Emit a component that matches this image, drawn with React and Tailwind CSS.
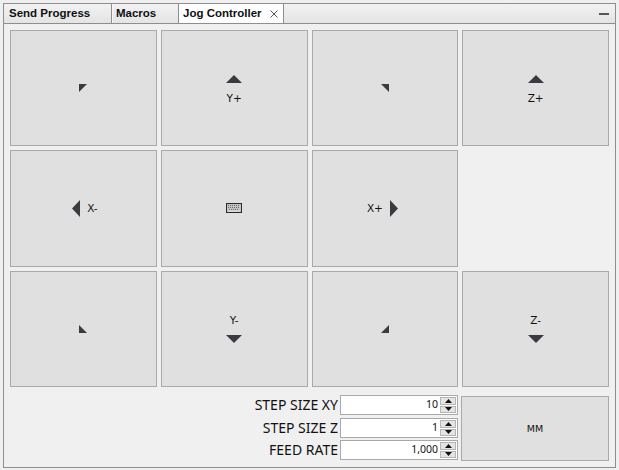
const JogButton = ({ children, className = '' }) => (
  <button className={`flex flex-col items-center justify-center bg-[#e0e0e0] border border-[#a9a9a9] text-[10.5px] leading-none text-[#111] font-['DejaVu_Sans',sans-serif] ${className}`}>
    {children}
  </button>
);

// dark triangle, 8 units on the short side
const Arrow = ({ points, className = 'w-[8px] h-[8px]', box = '0 0 8 8' }) => (
  <svg viewBox={box} className={`shrink-0 ${className}`}>
    <polygon points={points} fill="#383c40" />
  </svg>
);

const ArrowUp = () => <Arrow box="0 0 16 8" className="w-[16px] h-[8px]" points="8,0 16,8 0,8" />;
const ArrowDown = () => <Arrow box="0 0 16 8" className="w-[16px] h-[8px]" points="0,0 16,0 8,8" />;

const Spinner = ({ value }) => (
  <div className="flex w-[118px] h-[20px] border border-[#a9a9a9] bg-white">
    <div className="flex-1 flex items-center justify-end pr-[2px] text-[10.5px] text-[#111] font-['Noto_Sans',sans-serif]">{value}</div>
    <div className="w-[16px] flex flex-col mr-[1px] my-[1px] gap-[1px]">
      <div className="flex-1 flex items-center justify-center bg-[#e4e4e4] border border-[#b5b5b5]">
        <svg viewBox="0 0 7 4" className="w-[7px] h-[4px]"><polygon points="3.5,0 7,4 0,4" fill="#111" /></svg>
      </div>
      <div className="flex-1 flex items-center justify-center bg-[#e4e4e4] border border-[#b5b5b5]">
        <svg viewBox="0 0 7 4" className="w-[7px] h-[4px]"><polygon points="0,0 7,0 3.5,4" fill="#111" /></svg>
      </div>
    </div>
  </div>
);

const Field = ({ label, value, className = '' }) => (
  <div className={`flex items-center justify-end gap-[2px] ${className}`}>
    <span className="text-[14px] leading-none text-[#111] font-['Noto_Sans',sans-serif]">{label}</span>
    <Spinner value={value} />
  </div>
);

const KeyboardIcon = () => (
  <svg viewBox="0 0 16 10" className="w-[16px] h-[10px]">
    <rect x="0.5" y="0.5" width="15" height="9" fill="#c4c4c4" stroke="#2a2a2a" />
    <path d="M2 2.5h12M2 4.5h12M3 6.5h10" stroke="#6e6e6e" strokeWidth="1" strokeDasharray="1 1" />
    <path d="M2 8h12" stroke="#e8e8e8" strokeWidth="1" />
  </svg>
);

export default function App() {
  return (
    <div className="w-[619px] h-[470px] bg-[#f0f0f0] p-[3px] font-['Liberation_Sans',sans-serif]">
      <div className="w-[613px] h-[465px] flex flex-col border border-[#8e8e8e]">
        {/* tab strip */}
        <div className="flex h-[20px] shrink-0 border-b border-[#8e8e8e] bg-gradient-to-b from-[#f2f2f2] to-[#e4e4e4] text-[11.5px] font-bold text-[#111]">
          <div className="w-[108px] flex items-center pl-[5px] border-r border-[#8e8e8e]">Send Progress</div>
          <div className="w-[67px] flex items-center pl-[3px] border-l border-l-[#f8f8f8] border-r border-r-[#8e8e8e]">Macros</div>
          <div className="w-[105px] flex items-center pl-[4px] bg-white border-r border-[#8e8e8e]">
            <span className="w-[87px] whitespace-nowrap">Jog Controller</span>
            <svg viewBox="0 0 8 8" className="w-[8px] h-[8px]"><path d="M0.5 0.5l7 7M7.5 0.5l-7 7" stroke="#555" strokeWidth="1" fill="none" /></svg>
          </div>
          <div className="flex-1 flex items-center justify-end pr-[6px]">
            <div className="w-[10px] h-[2px] bg-[#555]" />
          </div>
        </div>

        {/* jog buttons */}
        <div className="flex-1 flex flex-col pt-[6px] px-[6px]">
          <div className="grid grid-cols-4 grid-rows-3 gap-[4px] h-[357px]">
            <JogButton><Arrow points="0,0 8,0 0,8" /></JogButton>
            <JogButton className="pt-[3px]">
              <ArrowUp />
              <span className="mt-[10px]">Y+</span>
            </JogButton>
            <JogButton><Arrow points="0,0 8,0 8,8" /></JogButton>
            <JogButton className="pt-[3px]">
              <ArrowUp />
              <span className="mt-[10px]">Z+</span>
            </JogButton>

            <JogButton className="!flex-row gap-[7px] pl-[3px]">
              <Arrow box="0 0 8 17" className="w-[8px] h-[17px]" points="8,0 8,17 0,8.5" />
              <span>X-</span>
            </JogButton>
            <JogButton><KeyboardIcon /></JogButton>
            <JogButton className="!flex-row gap-[7px] pr-[5px]">
              <span>X+</span>
              <Arrow box="0 0 8 17" className="w-[8px] h-[17px]" points="0,0 8,8.5 0,17" />
            </JogButton>
            <div />

            <JogButton><Arrow points="0,0 8,8 0,8" /></JogButton>
            <JogButton>
              <span className="mb-[10px]">Y-</span>
              <ArrowDown />
            </JogButton>
            <JogButton><Arrow points="8,0 8,8 0,8" /></JogButton>
            <JogButton>
              <span className="mb-[10px]">Z-</span>
              <ArrowDown />
            </JogButton>
          </div>

          {/* step sizes and units */}
          <div className="flex justify-end gap-[3px] mt-[8px]">
            <div className="flex flex-col">
              <Field label="STEP SIZE XY" value="10" />
              <Field label="STEP SIZE Z" value="1" className="mt-[3px]" />
              <Field label="FEED RATE" value="1,000" className="mt-[2px]" />
            </div>
            <JogButton className="w-[148px] h-[65px] mt-[1px] !text-[9.5px]">MM</JogButton>
          </div>
        </div>
      </div>
    </div>
  );
}
